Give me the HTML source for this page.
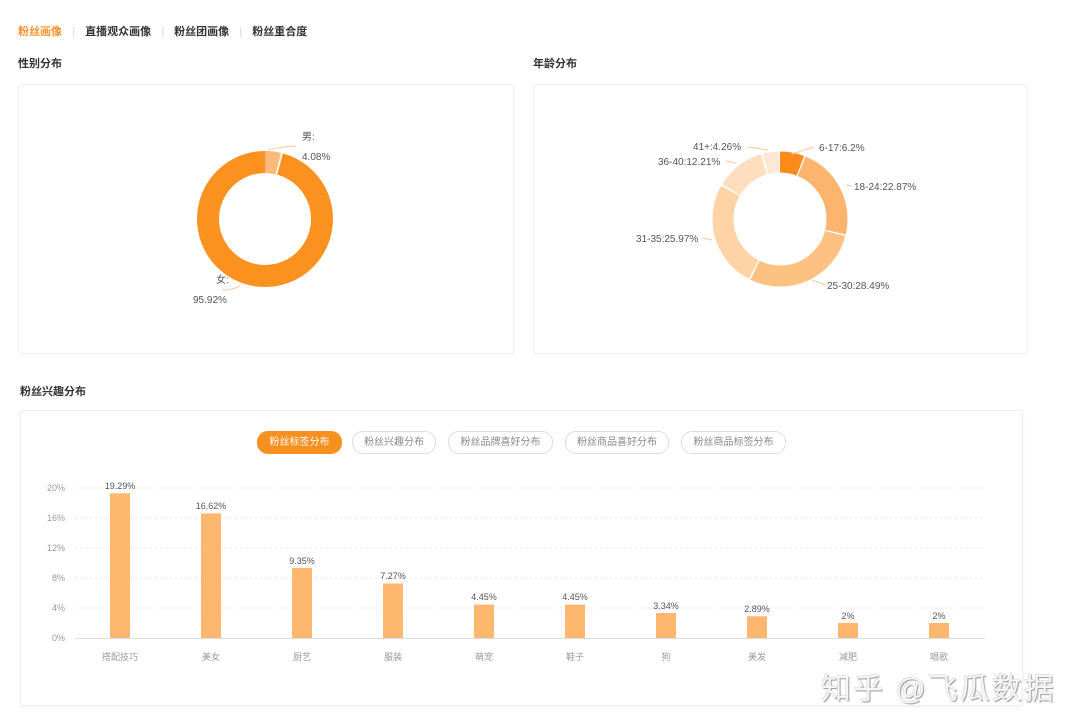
<!DOCTYPE html>
<html><head><meta charset="utf-8"><style>
body{margin:0;width:1080px;height:727px;background:#fff;font-family:"Liberation Sans","Noto Sans CJK SC",sans-serif;position:relative;overflow:hidden;color:#333}
.a{position:absolute;white-space:nowrap}
.box{position:absolute;border:1px solid #eeeeee;border-radius:3px;background:#fff}
.t{font-size:11px;font-weight:bold;color:#333}
.pill{position:absolute;top:431px;height:21px;line-height:21px;border:1px solid #ddd;border-radius:11px;font-size:10px;color:#888;text-align:center;background:#fff}
</style></head><body>
<div class="a" style="left:18px;top:23px;font-size:11px;font-weight:bold"><span style="color:#f7922d">粉丝画像</span><span style="color:#e4e4e4;margin:0 10px">|</span>直播观众画像<span style="color:#e4e4e4;margin:0 10px">|</span>粉丝团画像<span style="color:#e4e4e4;margin:0 10px">|</span>粉丝重合度</div>
<div class="a t" style="left:18px;top:55px">性别分布</div>
<div class="a t" style="left:533px;top:55px">年龄分布</div>
<div class="box" style="left:18px;top:84px;width:494px;height:268px"></div>
<div class="box" style="left:533px;top:84px;width:493px;height:268px"></div>
<div class="a t" style="left:20px;top:383px">粉丝兴趣分布</div>
<div class="box" style="left:20px;top:410px;width:1001px;height:294px;box-shadow:0 1px 3px rgba(0,0,0,0.06)"></div>
<div class="pill" style="left:257px;width:83px;background:#f7901e;border-color:#f7901e;color:#fff">粉丝标签分布</div>
<div class="pill" style="left:352px;width:82px">粉丝兴趣分布</div>
<div class="pill" style="left:448px;width:103px">粉丝品牌喜好分布</div>
<div class="pill" style="left:565px;width:102px">粉丝商品喜好分布</div>
<div class="pill" style="left:681px;width:103px">粉丝商品标签分布</div>

<svg class="a" style="left:0;top:0" width="1080" height="727" font-family="Liberation Sans, Noto Sans CJK SC, sans-serif">
<g transform="translate(265,219) rotate(-90)" fill="none" stroke-width="22">
<circle r="57" stroke="#fb921f"/>
<circle r="57" stroke="#fff" stroke-dasharray="15.8 400" stroke-dashoffset="0.6"/>
<circle r="57" stroke="#fbb97a" stroke-dasharray="13.4 400" stroke-dashoffset="0"/>
</g>
<g fill="none" stroke="#f6c99a" stroke-width="1"><path d="M268 150 Q285 146 296 146"/><path d="M240 286 Q232 290 222 290"/></g>
<g font-size="10" fill="#555"><text x="302" y="140">男:</text><text x="302" y="160">4.08%</text><text x="216" y="283">女:</text><text x="193" y="303">95.92%</text></g>

<g transform="translate(780,219) rotate(-90)" fill="none" stroke-width="21">
<circle r="57" stroke="#fb8c1c" stroke-dasharray="20.8 400" stroke-dashoffset="0"/>
<circle r="57" stroke="#fdb56d" stroke-dasharray="80.5 400" stroke-dashoffset="-22.2"/>
<circle r="57" stroke="#fdc282" stroke-dasharray="100.6 400" stroke-dashoffset="-104.1"/>
<circle r="57" stroke="#fed4a6" stroke-dasharray="91.6 400" stroke-dashoffset="-206.13"/>
<circle r="57" stroke="#fedebf" stroke-dasharray="42.3 400" stroke-dashoffset="-299.14"/>
<circle r="57" stroke="#fde8d8" stroke-dasharray="13.9 400" stroke-dashoffset="-342.87"/>
</g>
<g fill="none" stroke="#f6c99a" stroke-width="1">
<path d="M792 154 L814 147"/><path d="M846 185 L852 186"/><path d="M812 280 L826 285"/><path d="M712 240 L703 238"/><path d="M736 163 L726 161"/><path d="M768 150 L748 147"/></g>
<g font-size="10" fill="#555">
<text x="819" y="151">6-17:6.2%</text><text x="854" y="190">18-24:22.87%</text><text x="827" y="289">25-30:28.49%</text>
<text x="636" y="242">31-35:25.97%</text><text x="658" y="165">36-40:12.21%</text><text x="693" y="150">41+:4.26%</text></g>

<g stroke="#e6e6e6" stroke-dasharray="2 3">
<line x1="75" y1="488" x2="985" y2="488"/><line x1="75" y1="518" x2="985" y2="518"/><line x1="75" y1="548" x2="985" y2="548"/><line x1="75" y1="578" x2="985" y2="578"/><line x1="75" y1="608" x2="985" y2="608"/></g>
<line x1="75" y1="638.5" x2="985" y2="638.5" stroke="#ddd"/>
<g font-size="9" fill="#999" text-anchor="end"><text x="65" y="491">20%</text><text x="65" y="521">16%</text><text x="65" y="551">12%</text><text x="65" y="581">8%</text><text x="65" y="611">4%</text><text x="65" y="641">0%</text></g>
<g fill="#fdb76e">
<rect x="110" y="493.3" width="20" height="144.7"/><rect x="201" y="513.4" width="20" height="124.6"/><rect x="292" y="567.9" width="20" height="70.1"/><rect x="383" y="583.5" width="20" height="54.5"/><rect x="474" y="604.6" width="20" height="33.4"/><rect x="565" y="604.6" width="20" height="33.4"/><rect x="656" y="613" width="20" height="25"/><rect x="747" y="616.3" width="20" height="21.7"/><rect x="838" y="623" width="20" height="15"/><rect x="929" y="623" width="20" height="15"/></g>
<g font-size="9" fill="#555" text-anchor="middle">
<text x="120" y="489">19.29%</text><text x="211" y="509">16.62%</text><text x="302" y="564">9.35%</text><text x="393" y="579">7.27%</text><text x="484" y="600">4.45%</text><text x="575" y="600">4.45%</text><text x="666" y="609">3.34%</text><text x="757" y="612">2.89%</text><text x="848" y="619">2%</text><text x="939" y="619">2%</text></g>
<g font-size="9" fill="#999" text-anchor="middle">
<text x="120" y="660">搭配技巧</text><text x="211" y="660">美女</text><text x="302" y="660">厨艺</text><text x="393" y="660">服装</text><text x="484" y="660">萌宠</text><text x="575" y="660">鞋子</text><text x="666" y="660">狗</text><text x="757" y="660">美发</text><text x="848" y="660">减肥</text><text x="939" y="660">唱歌</text></g>
</svg>
<div class="a" style="left:821px;top:664px;font-size:30px;color:#f6f6f6;text-shadow:1px 1px 1px #999,-0.5px -0.5px 0 #ccc;letter-spacing:2px">知乎 @飞瓜数据</div>
</body></html>
